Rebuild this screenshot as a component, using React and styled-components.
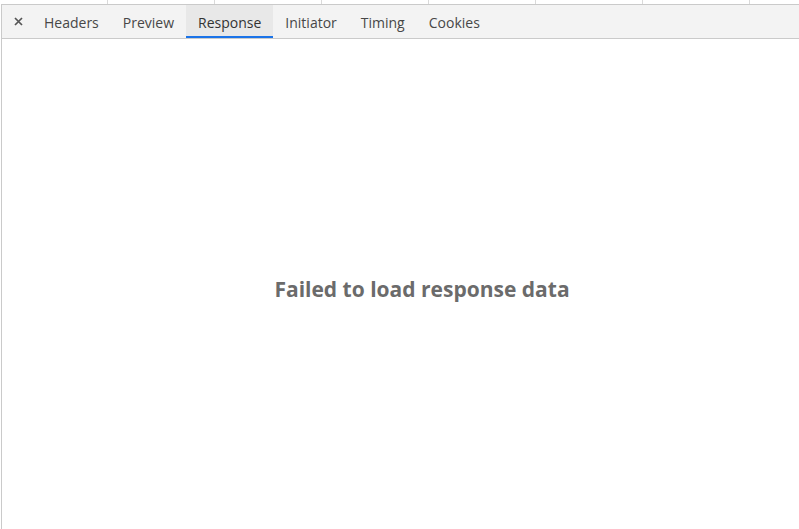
import styled, { createGlobalStyle } from 'styled-components';

const GlobalStyle = createGlobalStyle`
    html, body {
        margin: 0;
        padding: 0;
        background: #ffffff;
    }
    body {
        font-family: "Open Sans", "Noto Sans", sans-serif;
    }
`

const tabs = ['Headers', 'Preview', 'Response', 'Initiator', 'Timing', 'Cookies'];
const columns = 8;

const App = () => {
    // jsx *****************************************
    return (
        <>
            <GlobalStyle />
            <Page>
                <ColumnStrip>
                    {Array.from({ length: columns }).map((_, i) => (
                        <Column key={i} />
                    ))}
                </ColumnStrip>
                <Panel>
                    <TabBar>
                        <CloseButton aria-label="Close">
                            <svg width="9" height="9" viewBox="0 0 9 9">
                                <path d="M1 1L8 8M8 1L1 8" stroke="#555555" strokeWidth="1.7" />
                            </svg>
                        </CloseButton>
                        {tabs.map((tab) => (
                            <Tab key={tab} active={tab === 'Response'}>{tab}</Tab>
                        ))}
                    </TabBar>
                    <Body>
                        <EmptyMessage>Failed to load response data</EmptyMessage>
                    </Body>
                </Panel>
            </Page>
        </>
    );
    // *********************************************
}

const Page = styled.div`
    display: flex;
    flex-direction: column;
    width: 799px;
    height: 529px;
    overflow: hidden;
`

const ColumnStrip = styled.div`
    display: flex;
    height: 4px;
    padding-left: 1px;
    flex-shrink: 0;
`

const Column = styled.div`
    width: 107px;
    flex-shrink: 0;
    border-right: 1px solid #dadada;
    box-sizing: border-box;
`

const Panel = styled.div`
    flex: 1;
    display: flex;
    flex-direction: column;
    border-top: 1px solid #cacaca;
    border-left: 1px solid #cacaca;
    margin-left: 1px;
    min-height: 0;
`

const TabBar = styled.div`
    display: flex;
    align-items: stretch;
    height: 33px;
    background: #f3f3f3;
    border-bottom: 1px solid #cacaca;
    flex-shrink: 0;
`

const CloseButton = styled.div`
    display: flex;
    align-items: center;
    justify-content: center;
    width: 30px;
    padding: 0 0 1px 2px;
    box-sizing: border-box;
`

const Tab = styled.div`
    display: flex;
    align-items: center;
    padding: 1px 12px 0 12px;
    font-size: 14px;
    color: ${(props) => props.active ? '#333333' : '#474747'};
    background: ${(props) => props.active ? '#e8e8e8' : 'transparent'};
    box-shadow: ${(props) => props.active ? 'inset 0 -2px 0 #1a73e8' : 'none'};
    white-space: nowrap;
`

const Body = styled.div`
    flex: 1;
    display: flex;
    align-items: center;
    justify-content: center;
    padding-left: 43px;
    padding-top: 9px;
`

const EmptyMessage = styled.div`
    font-size: 21px;
    font-weight: 700;
    color: #6b6b6b;
`

export default App;
